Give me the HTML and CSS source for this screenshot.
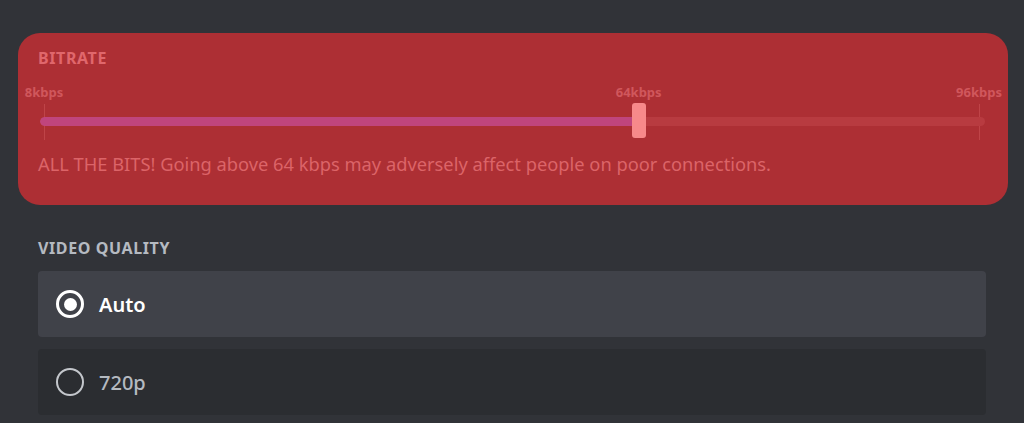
FILE: index.html
```html
<!DOCTYPE html>
<html>
<head>
<meta charset="utf-8">
<link rel="stylesheet" href="styles.css">
</head>
<body>
<div class="page">
  <section class="panel">
    <h5 class="label label-red">Bitrate</h5>
    <div class="slider">
      <div class="marker" style="left:0%"><span class="marker-text">8kbps</span><span class="tick"></span></div>
      <div class="marker" style="left:63.6%"><span class="marker-text">64kbps</span></div>
      <div class="marker" style="left:100%"><span class="marker-text">96kbps</span><span class="tick"></span></div>
      <div class="track"><div class="fill" style="width:63.6%"></div></div>
      <div class="thumb" style="left:63.6%"></div>
    </div>
    <p class="desc">ALL THE BITS! Going above 64 kbps may adversely affect people on poor connections.</p>
  </section>
  <section class="group">
    <h5 class="label label-gray">Video Quality</h5>
    <div class="options">
      <div class="option selected">
        <span class="radio"><span class="dot"></span></span>
        <span class="option-text">Auto</span>
      </div>
      <div class="option">
        <span class="radio"></span>
        <span class="option-text">720p</span>
      </div>
    </div>
  </section>
</div>
</body>
</html>
```
FILE: styles.css
```css
* { box-sizing: border-box; }
html, body { margin: 0; padding: 0; }
body {
  background: #313338;
  font-family: "Noto Sans", "Open Sans", sans-serif;
  width: 1024px;
  height: 423px;
  overflow: hidden;
}
.page { padding-top: 33px; }
.panel {
  margin: 0 16px 0 18px;
  height: 172px;
  background: #ad2f34;
  border-radius: 22px;
  padding: 16px 20px 0 20px;
}
.label {
  margin: 0;
  font-size: 16px;
  font-weight: 700;
  text-transform: uppercase;
  letter-spacing: 0.6px;
  line-height: 18px;
}
.label-red { color: #e0676c; }
.label-gray { color: #b5bac1; }
.slider {
  position: relative;
  margin: 0 9px 0 6px;
  height: 85px;
}
.marker {
  position: absolute;
  top: 17px;
  width: 0;
  display: flex;
  flex-direction: column;
  align-items: center;
}
.marker-text {
  font-size: 13px;
  font-weight: 700;
  color: #d0575c;
  line-height: 16px;
  white-space: nowrap;
}
.tick {
  margin-top: 4px;
  width: 1px;
  height: 36px;
  background: #bf4448;
}
.track {
  position: absolute;
  left: -4px;
  right: -6px;
  top: 50px;
  height: 9px;
  border-radius: 5px;
  background: #b83b40;
  overflow: hidden;
}
.fill {
  height: 100%;
  background: #c0457d;
  border-radius: 5px 0 0 5px;
}
.thumb {
  position: absolute;
  top: 36px;
  margin-left: -7px;
  width: 14px;
  height: 35px;
  border-radius: 3px;
  background: #f7898a;
}
.desc {
  margin: 0;
  font-size: 18.3px;
  line-height: 24px;
  color: #dc6468;
}
.group {
  margin: 34px 38px 0 38px;
}
.options {
  margin-top: 14px;
  display: flex;
  flex-direction: column;
  gap: 12px;
}
.option {
  height: 66px;
  border-radius: 4px;
  background: #2b2d31;
  display: flex;
  align-items: center;
  padding-left: 18px;
  gap: 15px;
}
.option.selected { background: #404249; }
.radio {
  width: 28px;
  height: 28px;
  border-radius: 50%;
  border: 2.5px solid #c4c7cc;
  display: flex;
  align-items: center;
  justify-content: center;
}
.selected .radio { border-color: #ffffff; border-width: 3px; }
.dot {
  width: 13px;
  height: 13px;
  border-radius: 50%;
  background: #ffffff;
}
.option-text {
  font-size: 20px;
  font-weight: 500;
  color: #b5bac1;
}
.selected .option-text { color: #ffffff; font-weight: 600; }
```
